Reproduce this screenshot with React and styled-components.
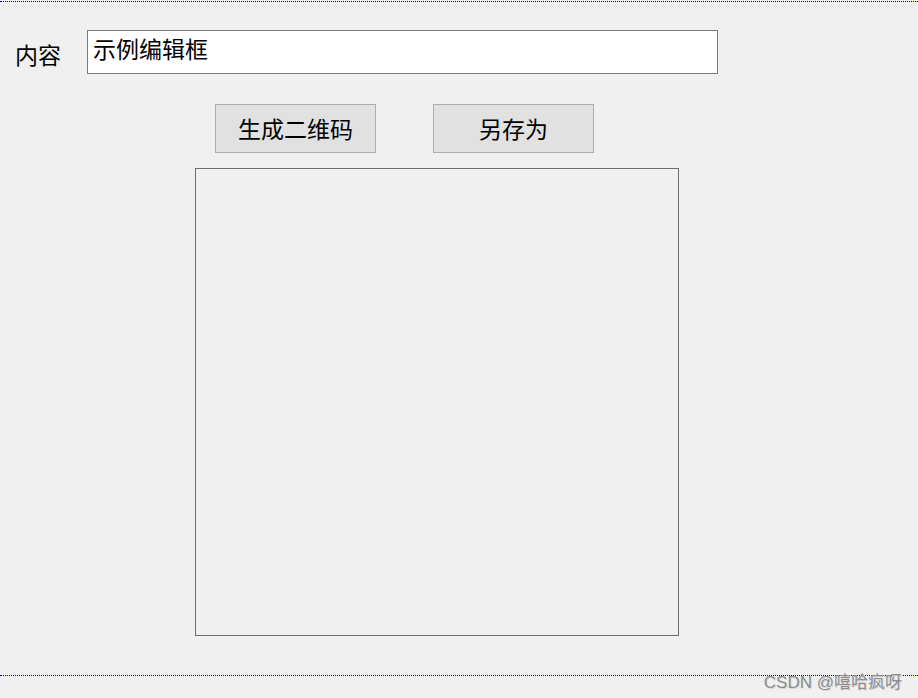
import React from 'react'
import styled, { createGlobalStyle } from 'styled-components'

const Global = createGlobalStyle`
  html, body {
    margin: 0;
    padding: 0;
    background: #f0f0f0;
  }
  * { box-sizing: border-box; }
`

const Frame = styled.div`
  position: relative;
  width: 918px;
  height: 698px;
  background: #f0f0f0;
  font-family: "Noto Sans CJK SC", "Liberation Sans", sans-serif;
  color: #000;
  overflow: hidden;
  padding-top: 1px;
`

const Dotted = styled.div`
  height: 0;
  border-top: 1px dotted #00008b;
  margin-top: ${({ top }) => top}px;
`

const Row = styled.div`
  display: flex;
  align-items: center;
  margin-top: ${({ top }) => top}px;
  padding-left: ${({ left }) => left}px;
  gap: ${({ gap }) => gap || 0}px;
`

const Label = styled.span`
  width: 72px;
  font-size: 23px;
  line-height: 40px;
  padding-top: 4px;
`

const TextBox = styled.input`
  width: 631px;
  height: 44px;
  border: 1px solid #7a7a7a;
  background: #fff;
  padding: 0 0 8px 5px;
  font-family: inherit;
  font-size: 23px;
  color: #000;
  outline: none;
`

const Button = styled.button`
  width: 161px;
  height: 49px;
  background: #e1e1e1;
  border: 1px solid #adadad;
  border-radius: 0;
  font-family: inherit;
  font-size: 23px;
  color: #000;
  padding: 0 0 2px;
`

const Picture = styled.div`
  width: 484px;
  height: 468px;
  margin-top: 15px;
  margin-left: 195px;
  border: 1px solid #6d6d6d;
`

const Watermark = styled.div`
  position: absolute;
  right: 16px;
  top: 668px;
  font-family: "Liberation Sans", "Noto Sans CJK SC", sans-serif;
  font-size: 17px;
  color: #8c8c8c;
  text-shadow: 1px 1px 0 #d8d8d8;
`

export default function App() {
  return (
    <>
      <Global />
      <Frame>
        <Dotted top={0} />
        <Row top={28} left={15}>
          <Label>内容</Label>
          <TextBox defaultValue="示例编辑框" readOnly />
        </Row>
        <Row top={30} left={215} gap={57}>
          <Button>生成二维码</Button>
          <Button>另存为</Button>
        </Row>
        <Picture />
        <Dotted top={39} />
        <Watermark>CSDN @嘻哈疯呀</Watermark>
      </Frame>
    </>
  )
}
